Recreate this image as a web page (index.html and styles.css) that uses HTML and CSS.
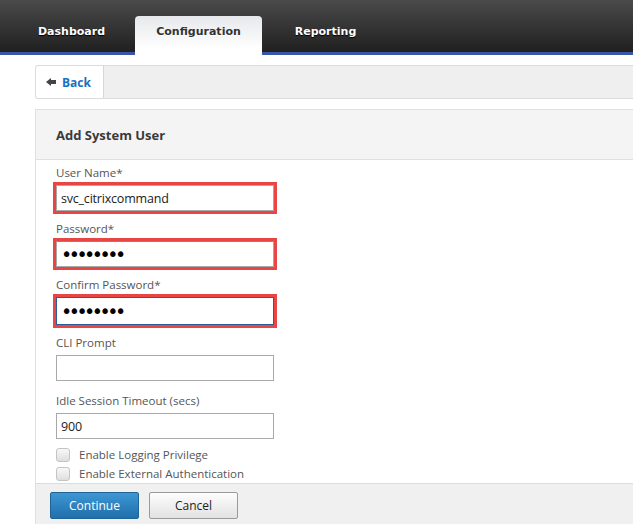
FILE: index.html
```html
<!DOCTYPE html>
<html lang="en">

<head>
  <meta charset="UTF-8">
  <meta name="viewport" content="width=device-width, initial-scale=1.0">
  <title>Add System User</title>
  <link rel="stylesheet" href="styles.css">
</head>

<body>

  <div class="topnav">
    <a class="tab">Dashboard</a>
    <a class="tab active">Configuration</a>
    <a class="tab">Reporting</a>
  </div>

  <div class="page">
    <div class="backbar">
      <a class="back"><span class="arrow"></span>Back</a>
    </div>

    <div class="panel">
      <div class="panel-head">Add System User</div>

      <div class="panel-body">
        <div class="field">
          <label>User Name*</label>
          <div class="box mark"><input type="text" value="svc_citrixcommand"></div>
        </div>
        <div class="field">
          <label>Password*</label>
          <div class="box mark"><input type="password" class="pw" value="password"></div>
        </div>
        <div class="field">
          <label>Confirm Password*</label>
          <div class="box mark tall"><input type="password" class="pw focus" value="password"></div>
        </div>
        <div class="field">
          <label>CLI Prompt</label>
          <div class="box"><input type="text"></div>
        </div>
        <div class="field wide">
          <label>Idle Session Timeout (secs)</label>
          <div class="box"><input type="text" value="900"></div>
        </div>

        <div class="checks">
          <label class="check"><span class="cb"></span>Enable Logging Privilege</label>
          <label class="check"><span class="cb"></span>Enable External Authentication</label>
        </div>
      </div>

      <div class="panel-foot">
        <button class="btn primary">Continue</button>
        <button class="btn">Cancel</button>
      </div>
    </div>
  </div>

</body>

</html>
```

FILE: styles.css
```css
* {
  margin: 0;
  padding: 0;
  box-sizing: border-box;
}

html,
body {
  width: 100%;
  height: 100%;
}

body {
  background: #fff;
  font-family: "Open Sans", "Noto Sans", sans-serif;
  color: #444;
  overflow: hidden;
}

/* top navigation */
.topnav {
  height: 55px;
  padding-left: 8px;
  display: flex;
  align-items: flex-end;
  background: linear-gradient(#4a4a4a, #222 95%);
  border-bottom: 3px solid #3b55a6;
}

.tab {
  width: 127px;
  height: 36px;
  text-align: center;
  line-height: 32px;
  font-family: "DejaVu Sans", sans-serif;
  font-size: 11px;
  font-weight: bold;
  color: #fff;
  text-shadow: 0 1px 1px #000;
}

.tab.active {
  height: 39px;
  margin-bottom: -3px;
  color: #333;
  text-shadow: 0 1px 0 #fff;
  background: linear-gradient(#e6e8eb, #fff 85%);
  border-radius: 4px 4px 0 0;
}

/* content */
.page {
  padding: 10px 0 0 35px;
}

.backbar {
  height: 34px;
  display: flex;
  background: #efefef;
  border: 1px solid #dcdcdc;
  border-right: none;
  border-radius: 3px 0 0 3px;
}

.back {
  width: 68px;
  display: flex;
  align-items: center;
  padding-left: 10px;
  background: #fff;
  border-right: 1px solid #d6d6d6;
  border-radius: 3px 0 0 3px;
  color: #1a70c2;
  font-weight: bold;
  font-size: 12px;
}

.arrow {
  position: relative;
  width: 10px;
  height: 8px;
  margin-right: 6px;
}

.arrow::before {
  content: "";
  position: absolute;
  left: 0;
  top: 0;
  border-top: 4px solid transparent;
  border-bottom: 4px solid transparent;
  border-right: 5px solid #444;
}

.arrow::after {
  content: "";
  position: absolute;
  left: 4px;
  top: 2px;
  width: 6px;
  height: 4px;
  background: #444;
}

.panel {
  margin-top: 10px;
  border-left: 1px solid #e0e0e0;
}

.panel-head {
  height: 51px;
  padding-left: 20px;
  line-height: 50px;
  background: #f4f4f4;
  border-top: 1px solid #e0e0e0;
  border-bottom: 1px solid #e0e0e0;
  font-size: 13px;
  font-weight: bold;
  color: #3a3a3a;
}

.panel-body {
  padding: 4px 0 0 17px;
}

.field + .field {
  padding-top: 6px;
}

.field.wide {
  padding-top: 8px;
}

.field label {
  display: block;
  height: 18px;
  line-height: 18px;
  padding-left: 3px;
  font-size: 11.5px;
  color: #555;
}

.box {
  width: 224px;
  height: 32px;
  border: 3px solid transparent;
}

.box.mark {
  border-color: #e84545;
}

.box.tall {
  height: 34px;
}

.box input {
  width: 218px;
  height: 100%;
  padding: 0 4px;
  border: 1px solid #a9a9a9;
  font-family: "Open Sans", "Noto Sans", sans-serif;
  font-size: 12.5px;
  letter-spacing: -0.2px;
  color: #222;
  outline: none;
}

.box input.pw {
  font-family: "DejaVu Sans", sans-serif;
  font-size: 19px;
  letter-spacing: -3.5px;
  color: #000;
  border-top-color: #888;
}

.box input.focus {
  border-color: #2a5d9c;
}

.checks {
  padding: 3px 0 0 3px;
}

.check {
  display: flex;
  align-items: center;
  height: 19px;
  font-size: 11.5px;
  color: #555;
}

.cb {
  width: 14px;
  height: 14px;
  margin-right: 9px;
  border: 1px solid #c4c4c4;
  border-radius: 3px;
  background: linear-gradient(#f8f8f8, #dedede);
}

.panel-foot {
  height: 41px;
  padding: 8px 0 0 14px;
  display: flex;
  gap: 10px;
  background: #f0f0f0;
  border-top: 1px solid #dcdcdc;
}

.btn {
  width: 89px;
  height: 27px;
  border: 1px solid #9a9a9a;
  border-radius: 2px;
  background: linear-gradient(#fdfdfd, #e2e2e2);
  font-family: "Open Sans", "Noto Sans", sans-serif;
  font-size: 12px;
  color: #222;
}

.btn.primary {
  border-color: #1e6296;
  background: linear-gradient(#3d97d3, #1f6fac);
  color: #fff;
}
```
